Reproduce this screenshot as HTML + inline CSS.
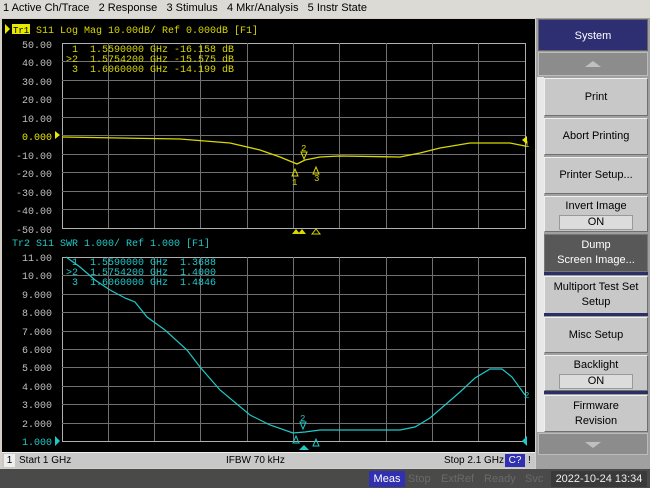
<!DOCTYPE html>
<html><head><meta charset="utf-8"><style>
*{margin:0;padding:0;box-sizing:border-box}
body{width:650px;height:488px;background:#d4d0c8;position:relative;overflow:hidden;font-family:"Liberation Sans",sans-serif;font-size:11px}
.abs{position:absolute}
.menu{left:0;top:0;width:650px;height:18px;background:#dcdad5;color:#000;font-size:11px;line-height:17px;padding-left:3px;white-space:pre}
.btn{position:absolute;left:544px;width:104px;background:#c8c8c8;border:1px solid #f0f0f0;border-right-color:#707070;border-bottom-color:#707070;color:#000;text-align:center;font-size:11px;display:flex;flex-direction:column;justify-content:center;line-height:15px}
.on{margin:1px auto 0;width:74px;height:15px;background:#dcdcdc;border:1px solid #999;line-height:13px}
.sep{position:absolute;left:544px;width:104px;height:3px;background:#2e2e66}
svg text{white-space:pre}
</style></head><body>
<div class="abs menu">1 Active Ch/Trace   2 Response   3 Stimulus   4 Mkr/Analysis   5 Instr State</div>
<div class="abs" style="left:2px;top:19px;width:533px;height:433px;background:#000"></div>
<svg class="abs" style="left:0;top:0" width="540" height="452" font-family="Liberation Mono,monospace" font-size="10">
<g stroke="#707070" stroke-width="1" fill="none">
<rect x="62.5" y="43.5" width="463" height="185" stroke="#b0b0b0"/>
<path d="M108.5 43V228M154.5 43V228M200.5 43V228M247.5 43V228M293.5 43V228M339.5 43V228M386.5 43V228M432.5 43V228M478.5 43V228M62 61.5H525M62 80.5H525M62 98.5H525M62 117.5H525M62 135.5H525M62 154.5H525M62 172.5H525M62 191.5H525M62 209.5H525"/>
<rect x="62.5" y="257.5" width="463" height="184" stroke="#b0b0b0"/>
<path d="M108.5 257V441M154.5 257V441M200.5 257V441M247.5 257V441M293.5 257V441M339.5 257V441M386.5 257V441M432.5 257V441M478.5 257V441M62 275.5H525M62 294.5H525M62 312.5H525M62 331.5H525M62 349.5H525M62 367.5H525M62 386.5H525M62 404.5H525M62 423.5H525"/>
</g>
<rect x="12" y="24" width="18" height="10" fill="#e8e800"/>
<polygon points="5,24 10,29 5,34" fill="#e8e800"/>
<text x="13" y="33" fill="#000" font-size="9">Tr1</text>
<text x="36" y="33" fill="#d8d800">S11 Log Mag 10.00dB/ Ref 0.000dB [F1]</text>
<g fill="#c0c0c0" text-anchor="end">
<text x="52" y="48">50.00</text><text x="52" y="66">40.00</text><text x="52" y="85">30.00</text><text x="52" y="103">20.00</text><text x="52" y="122">10.00</text>
<text x="52" y="159">-10.00</text><text x="52" y="177">-20.00</text><text x="52" y="196">-30.00</text><text x="52" y="214">-40.00</text><text x="52" y="233">-50.00</text>
</g>
<text x="52" y="140" fill="#e8e800" text-anchor="end">0.000</text>
<polygon points="55,131 60,135 55,139" fill="#e8e800"/>
<g fill="#d8d800"><text x="66" y="52"> 1  1.5590000 GHz -16.158 dB</text><text x="66" y="62">&gt;2  1.5754200 GHz -15.575 dB</text><text x="66" y="72"> 3  1.6060000 GHz -14.199 dB</text></g>
<polyline fill="none" stroke="#d8d800" stroke-width="1.3" points="62,137 120,138 180,139 230,143 260,150 280,157 297,164 305,160 320,157 340,156 400,157 420,153 440,148 470,143 510,143 525,146"/>
<g fill="none" stroke="#d8d800"><path d="M292 176l3-7 3 7zM301 152l3 7 3-7zM313 174l3-7 3 7z"/></g>
<g fill="#d8d800" font-size="9"><text x="292" y="185">1</text><text x="301" y="151">2</text><text x="314" y="181">3</text><text x="524" y="147">1</text></g>
<polygon points="527,136 522,140 527,144" fill="#e8e800"/>
<g fill="#d8d800"><polygon points="292,234 296,229 300,234"/><polygon points="298,234 302,229 306,234"/><polygon points="312,234 316,229 320,234" fill="none" stroke="#d8d800"/></g>
<text x="12" y="246" fill="#20c8c8">Tr2 S11 SWR 1.000/ Ref 1.000 [F1]</text>
<g fill="#c0c0c0" text-anchor="end">
<text x="52" y="261">11.00</text><text x="52" y="279">10.00</text><text x="52" y="298">9.000</text><text x="52" y="316">8.000</text><text x="52" y="335">7.000</text><text x="52" y="353">6.000</text><text x="52" y="371">5.000</text><text x="52" y="390">4.000</text><text x="52" y="408">3.000</text><text x="52" y="427">2.000</text>
</g>
<text x="52" y="445" fill="#20c8c8" text-anchor="end">1.000</text>
<polygon points="55,436 60,441 55,446" fill="#20c8c8"/>
<g fill="#20c8c8"><text x="66" y="265"> 1  1.5590000 GHz  1.3688</text><text x="66" y="275">&gt;2  1.5754200 GHz  1.4000</text><text x="66" y="285"> 3  1.6060000 GHz  1.4846</text></g>
<polyline fill="none" stroke="#20c8c8" stroke-width="1.2" points="66,257 80,267 95,280 110,290 125,298 135,302 147,317 165,330 187,350 200,367 220,390 250,415 270,425 293,433 305,432 320,430 340,430 400,430 415,427 430,418 445,405 460,392 475,378 490,369 502,369 512,377 525,395"/>
<g fill="none" stroke="#20c8c8"><path d="M293 443l3-7 3 7zM300 422l3 7 3-7zM313 446l3-7 3 7z"/></g>
<g fill="#20c8c8" font-size="9"><text x="300" y="421">2</text><text x="524" y="398">2</text></g>
<polygon points="527,436 522,441 527,446" fill="#20c8c8"/>
<polygon points="299,450 304,445 309,450" fill="#20c8c8"/>
</svg>
<div class="abs" style="left:2px;top:452px;width:533px;height:16px;background:#c8c8c8;border-top:1px solid #eee;font-size:10px;line-height:15px">
<span style="position:absolute;left:2px;top:1px;width:11px;height:13px;background:#eee;text-align:center;line-height:13px">1</span>
<span style="position:absolute;left:17px">Start 1 GHz</span>
<span style="position:absolute;left:224px">IFBW 70 kHz</span>
<span style="position:absolute;left:442px">Stop 2.1 GHz</span>
<span style="position:absolute;left:503px;top:1px;width:20px;height:13px;background:#3030b0;color:#fff;text-align:center;line-height:13px">C?</span>
<span style="position:absolute;left:526px">!</span>
</div>
<div class="abs" style="left:0;top:469px;width:650px;height:19px;background:#4a4a4a"></div>
<div class="abs" style="left:0;top:470px;width:650px;height:18px;font-size:11px;line-height:16px;color:#6a6a6a">
<span style="position:absolute;left:369px;top:1px;width:36px;height:16px;background:#3030b0;color:#fff;text-align:center">Meas</span>
<span style="position:absolute;left:408px;top:1px">Stop</span>
<span style="position:absolute;left:441px;top:1px">ExtRef</span>
<span style="position:absolute;left:484px;top:1px">Ready</span>
<span style="position:absolute;left:525px;top:1px">Svc</span>
<span style="position:absolute;left:551px;top:1px;width:96px;height:16px;background:#3a3a3a;color:#eee;text-align:center">2022-10-24 13:34</span>
</div>
<div class="abs" style="left:536px;top:18px;width:114px;height:451px;background:#a0a0a0"></div>
<div class="abs" style="left:538px;top:19px;width:110px;height:32px;background:#2e2e72;color:#fff;text-align:center;line-height:32px;border:1px solid #666">System</div>
<div class="abs" style="left:538px;top:52px;width:110px;height:24px;background:#8c8c8c;border:1px solid #bbb"><div style="margin:8px auto 0;width:0;height:0;border-left:8px solid transparent;border-right:8px solid transparent;border-bottom:6px solid #c0c0c0"></div></div>
<div class="abs" style="left:537px;top:77px;width:7px;height:355px;background:#e8e8e8"></div>
<div class="btn" style="top:78px;height:38px">Print</div>
<div class="btn" style="top:118px;height:37px">Abort Printing</div>
<div class="btn" style="top:157px;height:37px">Printer Setup...</div>
<div class="btn" style="top:196px;height:36px">Invert Image<div class="on">ON</div></div>
<div class="btn" style="top:234px;height:38px;background:#585858;color:#fff;border-color:#777">Dump<br>Screen Image...</div>
<div class="sep" style="top:272px"></div>
<div class="btn" style="top:276px;height:38px">Multiport Test Set<br>Setup</div>
<div class="sep" style="top:313px"></div>
<div class="btn" style="top:317px;height:36px">Misc Setup</div>
<div class="btn" style="top:355px;height:36px">Backlight<div class="on">ON</div></div>
<div class="sep" style="top:391px"></div>
<div class="btn" style="top:395px;height:37px">Firmware<br>Revision</div>
<div class="abs" style="left:538px;top:433px;width:110px;height:22px;background:#8c8c8c;border:1px solid #bbb"><div style="margin:8px auto 0;width:0;height:0;border-left:8px solid transparent;border-right:8px solid transparent;border-top:6px solid #c0c0c0"></div></div>
</body></html>
